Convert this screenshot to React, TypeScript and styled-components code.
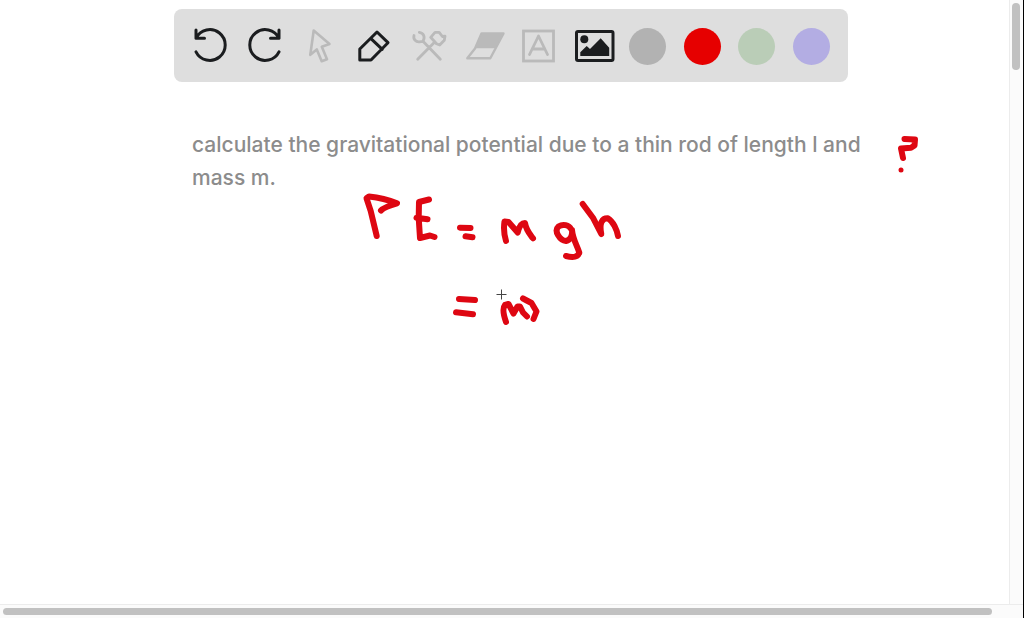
import React, { useState } from "react";
import styled, { createGlobalStyle } from "styled-components";

const GlobalStyle = createGlobalStyle`
  *, *::before, *::after { box-sizing: border-box; }
  body { margin: 0; background: #fff; font-family: Inter, "Liberation Sans", sans-serif; }
`;

const Frame = styled.div`
  display: grid;
  grid-template-columns: minmax(0, 1fr) 14px;
  grid-template-rows: minmax(0, 1fr) 14px;
  height: 100vh;
  border-right: 1px solid #000;
  overflow: hidden;
`;

const Board = styled.main`
  position: relative;
  overflow: hidden;
  padding: 9px 0 0 13px;
  background: #fff;
`;

const Column = styled.div`
  width: 100%;
  max-width: 674px;
  margin: 0 auto;
`;

const Toolbar = styled.div`
  display: grid;
  grid-template-columns: repeat(12, 1fr);
  padding: 15px 9px 14px;
  border-radius: 8px;
  background: #dedede;
`;

const ToolButton = styled.button<{ $muted?: boolean }>`
  display: flex;
  align-items: center;
  justify-content: center;
  height: 44px;
  padding: 0;
  border: 0;
  background: none;
  color: ${(p) => (p.$muted ? "#bababa" : "#1b1d1f")};
  cursor: pointer;
`;

const Icon = styled.svg`
  flex: none;
  width: 44px;
  height: 44px;
  fill: none;
  stroke: currentColor;
  stroke-width: 3;
  stroke-linecap: round;
  stroke-linejoin: round;
`;

const Swatch = styled.span<{ $color: string }>`
  width: 37px;
  height: 37px;
  border-radius: 50%;
  background: ${(p) => p.$color};
`;

const Problem = styled.p`
  margin: 46px -18px 0 18px;
  color: #8c8c8c;
  font-size: 21px;
  font-weight: 500;
  line-height: 33px;
`;

const Ink = styled.svg`
  position: absolute;
  top: 0;
  left: 0;
  width: 1009px;
  height: 604px;
  pointer-events: none;
  fill: none;
  stroke: #de0712;
  stroke-width: 6;
  stroke-linecap: round;
  stroke-linejoin: round;
`;

const VerticalTrack = styled.div`
  padding: 3px 2px;
  border-left: 1px solid #ececec;
  background: #fbfbfb;
`;

const VerticalThumb = styled.div`
  width: 8px;
  height: 67px;
  border-radius: 4px;
  background: #c1c1c1;
`;

const HorizontalTrack = styled.div`
  grid-column: 1 / -1;
  padding: 3px 31px 0 3px;
  border-top: 1px solid #ececec;
  background: #fbfbfb;
`;

const HorizontalThumb = styled.div`
  height: 7px;
  border-radius: 4px;
  background: #c1c1c1;
`;

type Tool = { name: string; muted?: boolean; art: React.ReactNode };

const tools: Tool[] = [
  { name: "Undo", art: <path d="M8 6V14.2H16.5M8 14.2A15.4 15.4 0 1 1 8 27.8" /> },
  { name: "Redo", art: <path d="M36 6V14.2H27.5M36 14.2A15.4 15.4 0 1 0 36 27.8" /> },
  {
    name: "Select",
    muted: true,
    art: <path strokeWidth="2.6" d="M15.7 6.5 31.5 20 23.8 22.8 29 35.2 23.7 37.2 18.8 25.4 12.3 30.8Z" />,
  },
  {
    name: "Pen",
    art: <path d="M25 8 36 18.7 19 36H7.800V25ZM18.7 14.3 30.3 25.3" />,
  },
  {
    name: "Tools",
    muted: true,
    art: (
      <path
        strokeWidth="2.8"
        d="M7 11.5C6 15.6 9 18.2 12.5 17.8L16 17.3 33.3 35.3M16 17.3C18.5 13 16.5 8.8 12.3 8.4M10.7 35.3 28 17.7M23.7 13.3 28 8.3H32.2L35.4 12.5 38 12.2 37.3 16.3 32.7 21 29.5 19.8Z"
      />
    ),
  },
  {
    name: "Eraser",
    muted: true,
    art: (
      <>
        <path strokeWidth="2.4" d="M19.5 9.500H41.500L28.300 34.300H5.300L13 24.500Z" />
        <path fill="currentColor" stroke="none" d="M19.5 9.500H41.500L33.500 24.300H13Z" />
      </>
    ),
  },
  {
    name: "Text",
    muted: true,
    art: (
      <g strokeWidth="2.8">
        <rect x="7.5" y="7" width="30" height="30" strokeLinejoin="miter" />
        <path d="M13.5 30.5 22.5 12 31.5 30.5M16.2 25H28.8" />
      </g>
    ),
  },
  {
    name: "Image",
    art: (
      <>
        <rect x="5.500" y="7.500" width="36.500" height="29" rx="1.5" />
        <circle cx="13.3" cy="15.3" r="4" fill="currentColor" stroke="none" />
        <path
          fill="currentColor"
          stroke="none"
          d="M9.3 32V28.3L15.7 22 19 25 29.7 14.3 38.2 23.7V32Z"
        />
      </>
    ),
  },
];

const colors = [
  { name: "Gray", value: "#b2b2b2" },
  { name: "Red", value: "#e60000" },
  { name: "Green", value: "#bacdb7" },
  { name: "Purple", value: "#b3ade3" },
];

const strokes = [
  // PE =
  "M376.7 236 370.7 211 366.500 198.300 369 196.500Q384 198 397 203.300C391 205 384 207 381 210.500",
  "M429 199.500 419 202 418.700 218 420 238 430 235.500 434.500 237M416.500 217.700 427.500 219.300",
  "M460 227.700 470.500 228M465.500 236.300 472.500 237.300",
  // m g h
  "M506 241Q503 231 504.500 221.500L508.500 222 517.700 232.500Q520 223 525 223C526 230 529 233 533 238.300",
  "M571 229C569 225 563 223.500 558.500 226.500C553.500 231 560 240.500 566 241C571 240 572.500 235 572 230C573 240 577 245 579.300 252.700Q577 259 566 256",
  "M582.7 204 593.300 218.300 601.300 234C599 223 602 218 608 218.300C613 221 617 230 618 236",
  // second line
  "M459 299 475 300M456 312.300 473 314.300",
  "M506 322C503.500 315 502.500 308 505 305L508.500 304 513.500 313.500 517.500 306.500 520 306.500 523 312.500 527 316.500M523 298.500 531.500 303 536.500 311.500 533.500 319",
  // question mark
  "M904.5 139 915 139.500 914.500 145.500 911 147.700 901 148.500 903 158",
];

export default function App() {
  const [activeTool, setActiveTool] = useState("Pen");
  const [activeColor, setActiveColor] = useState("Red");

  return (
    <>
      <GlobalStyle />
      <Frame>
        <Board>
          <Column>
            <Toolbar role="toolbar" aria-label="Drawing tools">
              {tools.map((tool) => (
                <ToolButton
                  key={tool.name}
                  type="button"
                  $muted={tool.muted}
                  aria-label={tool.name}
                  aria-pressed={activeTool === tool.name}
                  onClick={() => setActiveTool(tool.name)}
                >
                  <Icon viewBox="0 0 44 44" aria-hidden="true">
                    {tool.art}
                  </Icon>
                </ToolButton>
              ))}
              {colors.map((color) => (
                <ToolButton
                  key={color.name}
                  type="button"
                  aria-label={color.name}
                  aria-pressed={activeColor === color.name}
                  onClick={() => setActiveColor(color.name)}
                >
                  <Swatch $color={color.value} />
                </ToolButton>
              ))}
            </Toolbar>
            <Problem>
              calculate the gravitational potential due to a thin rod of length l and mass m.
            </Problem>
          </Column>
          <Ink viewBox="0 0 1009 604" aria-hidden="true">
            {strokes.map((d) => (
              <path key={d} d={d} />
            ))}
            <circle cx="901" cy="170" r="2.500" fill="#de0712" stroke="none" />
            <path
              d="M496.5 294.500H506.500M501.500 289.500V299.500"
              stroke="#444"
              strokeWidth="1"
              strokeLinecap="butt"
            />
          </Ink>
        </Board>
        <VerticalTrack>
          <VerticalThumb />
        </VerticalTrack>
        <HorizontalTrack>
          <HorizontalThumb />
        </HorizontalTrack>
      </Frame>
    </>
  );
}
